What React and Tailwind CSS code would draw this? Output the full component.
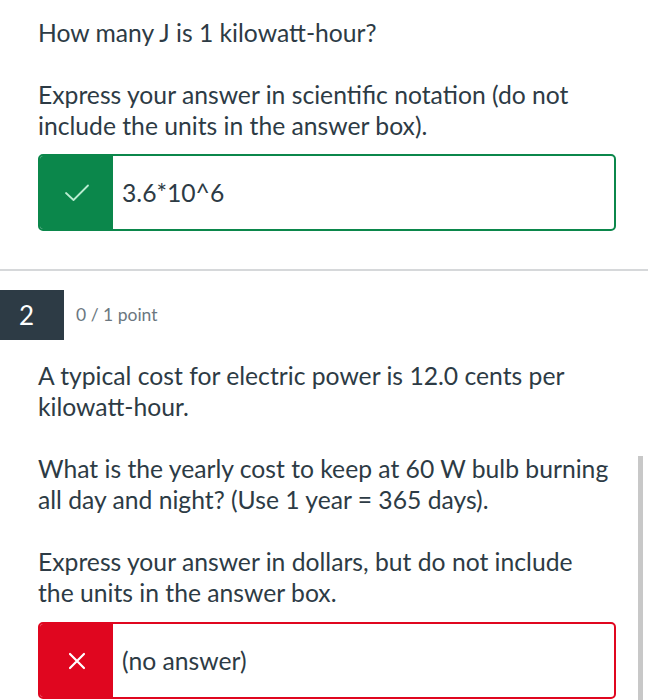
import React from "react";

function Para({ children, className = "" }) {
  return (
    <p className={"max-w-[572px] text-[24.7px] leading-[31px] text-[#2d3b45] " + className}>{children}</p>
  );
}

export default function App() {
  return (
    <div
      className="relative w-[648px] h-[700px] overflow-hidden bg-white"
      style={{ fontFamily: "Lato, 'Open Sans', sans-serif" }}
    >
      <div className="pl-[38px] pr-[32px] pt-[17px]">
        <Para>How many J is 1 kilowatt-hour?</Para>
        <Para className="mt-[31px]">
          Express your answer in scientific notation (do not include the units in the answer box).
        </Para>
        <div className="mt-[13px] flex h-[77px] rounded-[5px] border-2 border-[#0b874b] overflow-hidden">
          <div className="w-[73px] bg-[#0b874b] flex items-center justify-center">
            <svg width="26" height="18" viewBox="0 0 26 18" fill="none">
              <path d="M2 9 L9.5 16 L24 1.5" stroke="#b9ecd0" strokeWidth="1.8" strokeLinecap="round" strokeLinejoin="round" />
            </svg>
          </div>
          <div className="flex-1 flex items-center pl-[9px] text-[24.7px] text-[#2d3b45]">3.6*10^6</div>
        </div>
      </div>
      <div className="mt-[38px] h-[2px] bg-[#d6d8da]" />
      <div className="mt-[19px] flex items-center">
        <div className="w-[64px] h-[50px] bg-[#2d3b45] flex items-center pl-[19px] text-white text-[26px]">2</div>
        <div className="ml-[12px] text-[17.5px] text-[#6b7780]">0 / 1 point</div>
      </div>
      <div className="pl-[38px] pr-[32px] pt-[20px]">
        <Para>A typical cost for electric power is 12.0 cents per kilowatt-hour.</Para>
        <Para className="mt-[31px]">
          What is the yearly cost to keep at 60 W bulb burning all day and night? (Use 1 year = 365 days).
        </Para>
        <Para className="mt-[31px]">
          Express your answer in dollars, but do not include the units in the answer box.
        </Para>
        <div className="mt-[14px] flex h-[77px] rounded-[5px] border-2 border-[#e0061f] overflow-hidden">
          <div className="w-[73px] bg-[#e0061f] flex items-center justify-center">
            <svg width="18" height="18" viewBox="0 0 18 18" fill="none">
              <path d="M2 2 L16 16 M16 2 L2 16" stroke="#ffffff" strokeWidth="2.2" strokeLinecap="round" />
            </svg>
          </div>
          <div className="flex-1 flex items-center pl-[9px] text-[24.7px] text-[#2d3b45]">(no answer)</div>
        </div>
      </div>
      <div className="absolute left-[638px] top-[456px] w-[5px] h-[260px] bg-[#c8c8c8]" />
    </div>
  );
}
